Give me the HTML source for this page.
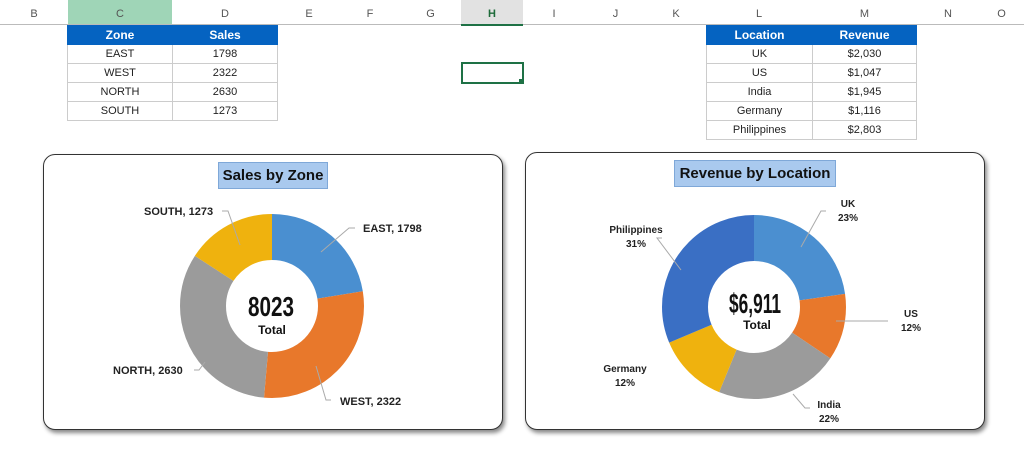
<!DOCTYPE html><html><head><style>
body{margin:0;width:1024px;height:459px;background:#fff;font-family:"Liberation Sans",sans-serif;position:relative;overflow:hidden}
.a{position:absolute}
.hd{top:0;height:24px;border-bottom:1px solid #bbb;font-size:11px;color:#555;text-align:center;line-height:28px}
table{position:absolute;border-collapse:collapse;font-size:11px;color:#222}
td{border:1px solid #ccc;text-align:center;height:18px;padding:0}
th{background:#0563c1;color:#fff;font-size:12px;height:18px;padding:0;border:1px solid #0563c1}
.box{border:1.5px solid #333;border-radius:12px;box-shadow:2px 3px 4px #888;background:#fff}
.tt{background:#a9c9ee;border:1px solid #7fa8d8;font-weight:bold;font-size:15px;text-align:center;color:#111}
.lb{font-size:11px;font-weight:bold;fill:#222}
</style></head><body>
<div class="a hd" style="left:0;width:68px">B</div>
<div class="a hd" style="left:68px;width:104px;background:#9fd5b7">C</div>
<div class="a hd" style="left:172px;width:106px">D</div>
<div class="a hd" style="left:278px;width:62px">E</div>
<div class="a hd" style="left:340px;width:60px">F</div>
<div class="a hd" style="left:400px;width:61px">G</div>
<div class="a hd" style="left:461px;width:62px;background:#e2e2e2;font-weight:bold;color:#1e6b3a;border-bottom:2px solid #1e7145">H</div>
<div class="a hd" style="left:523px;width:62px">I</div>
<div class="a hd" style="left:585px;width:61px">J</div>
<div class="a hd" style="left:646px;width:60px">K</div>
<div class="a hd" style="left:706px;width:106px">L</div>
<div class="a hd" style="left:812px;width:105px">M</div>
<div class="a hd" style="left:917px;width:62px">N</div>
<div class="a hd" style="left:979px;width:45px">O</div>
<table style="left:67px;top:25px;width:211px"><tr><th style="width:104px">Zone</th><th>Sales</th></tr>
<tr><td>EAST</td><td>1798</td></tr><tr><td>WEST</td><td>2322</td></tr><tr><td>NORTH</td><td>2630</td></tr><tr><td>SOUTH</td><td>1273</td></tr></table>
<table style="left:706px;top:25px;width:211px"><tr><th style="width:105px">Location</th><th>Revenue</th></tr>
<tr><td>UK</td><td>$2,030</td></tr><tr><td>US</td><td>$1,047</td></tr><tr><td>India</td><td>$1,945</td></tr><tr><td>Germany</td><td>$1,116</td></tr><tr><td>Philippines</td><td>$2,803</td></tr></table>
<div class="a" style="left:461px;top:62px;width:59px;height:18px;border:2px solid #1e7145"></div>
<div class="a" style="left:519px;top:79px;width:5px;height:5px;background:#1e7145"></div>
<div class="a box" style="left:43px;top:154px;width:458px;height:274px"></div>
<div class="a box" style="left:525px;top:152px;width:458px;height:276px"></div>
<div class="a tt" style="left:218px;top:162px;width:108px;height:25px;line-height:25px">Sales by Zone</div>
<div class="a tt" style="left:674px;top:160px;width:160px;height:25px;line-height:25px">Revenue by Location</div>
<svg class="a" style="left:0;top:0" width="1024" height="459">
<g transform="translate(272,306) rotate(-90)" fill="none" stroke-width="46">
<circle r="69" stroke="#4a8fd0" stroke-dasharray="97.2 500" stroke-dashoffset="0"/>
<circle r="69" stroke="#e8782b" stroke-dasharray="125.5 500" stroke-dashoffset="-97.2"/>
<circle r="69" stroke="#9b9b9b" stroke-dasharray="142.1 500" stroke-dashoffset="-222.7"/>
<circle r="69" stroke="#efb20e" stroke-dasharray="68.8 500" stroke-dashoffset="-364.8"/>
</g>
<g transform="translate(754,307) rotate(-90)" fill="none" stroke-width="46">
<circle r="69" stroke="#4b8fd0" stroke-dasharray="98.4 500" stroke-dashoffset="0"/>
<circle r="69" stroke="#e8782b" stroke-dasharray="50.8 500" stroke-dashoffset="-98.4"/>
<circle r="69" stroke="#9b9b9b" stroke-dasharray="94.3 500" stroke-dashoffset="-149.2"/>
<circle r="69" stroke="#efb20e" stroke-dasharray="54.1 500" stroke-dashoffset="-243.5"/>
<circle r="69" stroke="#3a6fc4" stroke-dasharray="135.9 500" stroke-dashoffset="-297.6"/>
</g>
<g stroke="#aaa" fill="none" stroke-width="1">
<path d="M222 211h6l12 34M355 228h-6l-28 24M194 370h5l6-8M331 400h-5l-10-34"/>
<path d="M826 211h-5l-20 36M888 321h-52M662 238h-5l24 32M810 408h-5l-12-14"/>
</g>
<text class="lb" x="144" y="215">SOUTH, 1273</text>
<text class="lb" x="363" y="232">EAST, 1798</text>
<text class="lb" x="113" y="374">NORTH, 2630</text>
<text class="lb" x="340" y="405">WEST, 2322</text>
<text x="248" y="316" textLength="46" lengthAdjust="spacingAndGlyphs" style="font:bold 28px 'Liberation Sans',sans-serif" fill="#111">8023</text>
<text x="272" y="334" text-anchor="middle" style="font:bold 12px 'Liberation Sans',sans-serif" fill="#111">Total</text>
<text x="729" y="313" textLength="52" lengthAdjust="spacingAndGlyphs" style="font:bold 28px 'Liberation Sans',sans-serif" fill="#111">$6,911</text>
<text x="757" y="329" text-anchor="middle" style="font:bold 12px 'Liberation Sans',sans-serif" fill="#111">Total</text>
<g class="lb" text-anchor="middle" style="font-size:10px">
<text x="848" y="207">UK</text><text x="848" y="221">23%</text>
<text x="911" y="317">US</text><text x="911" y="331">12%</text>
<text x="829" y="408">India</text><text x="829" y="422">22%</text>
<text x="625" y="372">Germany</text><text x="625" y="386">12%</text>
<text x="636" y="233">Philippines</text><text x="636" y="247">31%</text>
</g>
</svg>
</body></html>
